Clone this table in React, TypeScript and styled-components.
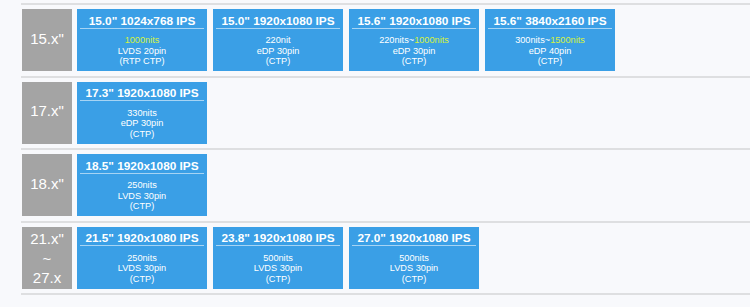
import styled, { createGlobalStyle } from "styled-components";

const GlobalStyle = createGlobalStyle`
  html, body {
    margin: 0;
    padding: 0;
    background: #f8f9fc;
    font-family: "Liberation Sans", Arial, sans-serif;
  }
`;

interface IPanel {
  title: string;
  lines: (string | [string, string])[];
}

interface IRow {
  label: string[];
  panels: IPanel[];
}

const rows: IRow[] = [
  {
    label: ["15.x\""],
    panels: [
      { title: "15.0\" 1024x768 IPS", lines: [["", "1000nits"], "LVDS 20pin", "(RTP CTP)"] },
      { title: "15.0\" 1920x1080 IPS", lines: ["220nit", "eDP 30pin", "(CTP)"] },
      { title: "15.6\" 1920x1080 IPS", lines: [["220nits~", "1000nits"], "eDP 30pin", "(CTP)"] },
      { title: "15.6\" 3840x2160 IPS", lines: [["300nits~", "1500nits"], "eDP 40pin", "(CTP)"] },
    ],
  },
  {
    label: ["17.x\""],
    panels: [{ title: "17.3\" 1920x1080 IPS", lines: ["330nits", "eDP 30pin", "(CTP)"] }],
  },
  {
    label: ["18.x\""],
    panels: [{ title: "18.5\" 1920x1080 IPS", lines: ["250nits", "LVDS 30pin", "(CTP)"] }],
  },
  {
    label: ["21.x\"", "~", "27.x"],
    panels: [
      { title: "21.5\" 1920x1080 IPS", lines: ["250nits", "LVDS 30pin", "(CTP)"] },
      { title: "23.8\" 1920x1080 IPS", lines: ["500nits", "LVDS 30pin", "(CTP)"] },
      { title: "27.0\" 1920x1080 IPS", lines: ["500nits", "LVDS 30pin", "(CTP)"] },
    ],
  },
];

const Page = styled.div`
  padding: 3px 0 0 21px;
`;

const Row = styled.div`
  display: flex;
  gap: 5px;
  border-top: 2px solid #dedfe1;
  padding: 4px 0 4.5px 1px;
`;

const SizeLabel = styled.div<{ multi: boolean }>`
  width: 50px;
  height: 62px;
  flex-shrink: 0;
  background: #a4a4a4;
  color: #ffffff;
  display: flex;
  flex-direction: column;
  align-items: center;
  justify-content: center;
  font-size: 15px;
  line-height: ${(props) => (props.multi ? "19.5px" : "18px")};
  padding: ${(props) => (props.multi ? "2px 0 0" : "0 0 3px")};
  box-sizing: border-box;
`;

const Panels = styled.div`
  display: flex;
  gap: 6px;
`;

const Panel = styled.div`
  width: 130px;
  height: 62px;
  background: #3a9fe6;
  color: #ffffff;
  display: flex;
  flex-direction: column;
`;

const Title = styled.div`
  margin: 0 3px;
  padding-top: 4.5px;
  font-size: 11.8px;
  font-weight: 700;
  line-height: 14px;
  text-align: center;
  white-space: nowrap;
  border-bottom: 1px solid #a6d4f4;
`;

const Specs = styled.div`
  padding-top: 6.5px;
  font-size: 9.2px;
  line-height: 10.6px;
  text-align: center;
  white-space: nowrap;
`;

const Highlight = styled.span`
  color: #d3f23f;
`;

function App() {
  return (
    <>
      <GlobalStyle />
      <Page>
        {rows.map((row, index) => (
          <Row key={index}>
            <SizeLabel multi={row.label.length > 1}>
              {row.label.map((text, i) => (
                <div key={i}>{text}</div>
              ))}
            </SizeLabel>
            <Panels>
              {row.panels.map((panel) => (
                <Panel key={panel.title}>
                  <Title>{panel.title}</Title>
                  <Specs>
                    {panel.lines.map((line, i) =>
                      typeof line === "string" ? (
                        <div key={i}>{line}</div>
                      ) : (
                        <div key={i}>
                          {line[0]}
                          <Highlight>{line[1]}</Highlight>
                        </div>
                      )
                    )}
                  </Specs>
                </Panel>
              ))}
            </Panels>
          </Row>
        ))}
        <Row />
      </Page>
    </>
  );
}

export default App;
